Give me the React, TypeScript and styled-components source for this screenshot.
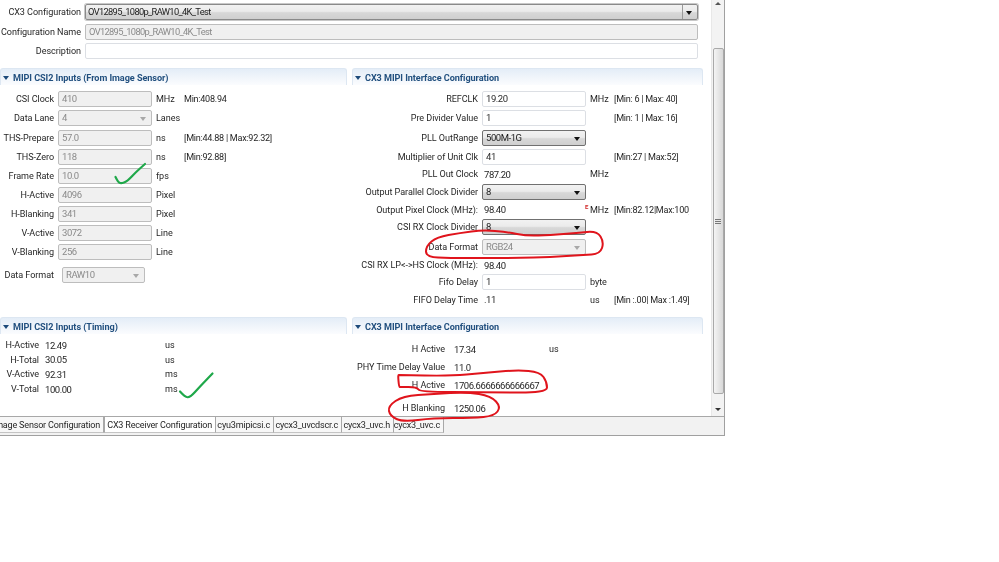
import React from "react";
import styled, { createGlobalStyle, css } from "styled-components";

const GlobalStyle = createGlobalStyle`
  html, body {
    margin: 0;
    padding: 0;
    background: #fff;
  }
  body {
    width: 999px;
    height: 562px;
    overflow: hidden;
    font-family: Roboto, "Open Sans", sans-serif;
    font-size: 9.05px;
    letter-spacing: -0.05px;
    color: #262626;
  }
`;

const Page = styled.div`
  position: relative;
  width: 999px;
  height: 562px;
  filter: blur(0.3px);
`;

const Window = styled.div`
  width: 724px;
  height: 435px;
  border-right: 1px solid #a0a0a0;
  border-bottom: 1px solid #a0a0a0;
  display: flex;
  flex-direction: column;
`;

const Body = styled.div`
  flex: 1;
  min-height: 0;
  display: flex;
`;

const Content = styled.div`
  width: 711px;
  padding-top: 4px;
`;

const TopRow = styled.div<{ $h: number }>`
  height: ${(p) => p.$h}px;
  display: grid;
  grid-template-columns: 81px 613px;
  column-gap: 4px;
`;

const TopLabel = styled.div`
  text-align: right;
  white-space: nowrap;
  line-height: 17px;
`;

const fieldBase = css`
  box-sizing: border-box;
  height: 16px;
  line-height: 14px;
  padding-left: 3px;
  border-radius: 2px;
  white-space: nowrap;
  overflow: hidden;
  letter-spacing: -0.45px;
  font-size: 9.5px;
`;

const Field = styled.div<{ $disabled?: boolean }>`
  ${fieldBase}
  border: 1px solid ${(p) => (p.$disabled ? "#bdbdbd" : "#dcdfe4")};
  background: ${(p) => (p.$disabled ? "#f0f0f0" : "#fff")};
  color: ${(p) => (p.$disabled ? "#8a8a8a" : "#2b2b2b")};
`;

const Combo = styled.div<{ $disabled?: boolean; $w?: number }>`
  ${fieldBase}
  position: relative;
  ${(p) => (p.$w ? `width: ${p.$w}px;` : "")}
  ${(p) =>
    p.$disabled
      ? css`
          border: 1px solid #bdbdbd;
          background: #f0f0f0;
          color: #8a8a8a;
        `
      : css`
          border: 1px solid #707070;
          background: linear-gradient(#f2f2f2 0%, #ebebeb 45%, #d8d8d8 55%, #cfcfcf 100%);
          color: #1c1c1c;
        `}
`;

const ComboArrow = styled.span<{ $disabled?: boolean }>`
  position: absolute;
  right: 5px;
  top: 6px;
  width: 0;
  height: 0;
  border-left: 3.5px solid transparent;
  border-right: 3.5px solid transparent;
  border-top: 4px solid ${(p) => (p.$disabled ? "#a8a8a8" : "#111")};
`;

const MainCombo = styled(Combo)`
  border: 1px solid #8a8a8a;
  box-shadow: 0 0 0 1px #c8c8c8;
  padding-left: 2px;
`;

const ComboDivider = styled.span`
  position: absolute;
  right: 14px;
  top: 0;
  bottom: 0;
  width: 1px;
  background: #9a9a9a;
`;

const ConfigName = styled.span`
  font-size: 9.3px;
  letter-spacing: -0.66px;
`;

const Panels = styled.div`
  margin-top: 9px;
  display: grid;
  grid-template-columns: 347px 351px;
  grid-template-rows: 249px 1fr;
  column-gap: 5px;
`;

const Section = styled.section``;

const SectionHead = styled.header`
  box-sizing: border-box;
  height: 17px;
  padding: 1px 0 0 2px;
  display: flex;
  align-items: center;
  gap: 4px;
  border: 1px solid #dde7f2;
  border-bottom: 0;
  border-radius: 3px 3px 0 0;
  background: linear-gradient(#e4edf7, #fbfcfe);
  font-weight: 700;
  font-size: 9.1px;
  color: #22507f;
  white-space: nowrap;
`;

const Triangle = styled.span`
  width: 0;
  height: 0;
  border-left: 3.5px solid transparent;
  border-right: 3.5px solid transparent;
  border-top: 4px solid #1d4a7a;
`;

const Rows = styled.div<{ $top: number }>`
  padding-top: ${(p) => p.$top}px;
`;

const Row = styled.div<{ $h: number; $cols: string }>`
  height: ${(p) => p.$h}px;
  display: grid;
  grid-template-columns: ${(p) => p.$cols};
  align-items: center;
  white-space: nowrap;
`;

const Label = styled.div`
  text-align: right;
`;

const Value = styled.div<{ $inset?: boolean }>`
  font-size: 9.5px;
  letter-spacing: -0.45px;
  ${(p) => (p.$inset ? "padding-left: 2px;" : "")}
`;

const Unit = styled.div`
  position: relative;
`;

const ErrorMark = styled.span`
  position: absolute;
  left: -5px;
  top: -2px;
  font-size: 6px;
  font-weight: 700;
  line-height: 8px;
  color: #d22a2a;
`;

const Note = styled.div`
  overflow: hidden;
  letter-spacing: -0.25px;
`;

const Scrollbar = styled.div`
  width: 13px;
  box-sizing: border-box;
  background: #f3f3f3;
  border-left: 1px solid #e8e8e8;
  display: flex;
  flex-direction: column;
  align-items: center;
`;

const ScrollArrow = styled.span<{ $up?: boolean }>`
  margin: ${(p) => (p.$up ? "2px 0 0" : "0 0 5px")};
  width: 0;
  height: 0;
  border-left: 3px solid transparent;
  border-right: 3px solid transparent;
  ${(p) => (p.$up ? "border-bottom: 3px solid #555;" : "border-top: 3px solid #333;")}
`;

const ScrollThumb = styled.div`
  width: 11px;
  flex: 1;
  margin: 43px 0 14px;
  box-sizing: border-box;
  border: 1px solid #a9a9a9;
  border-radius: 2px;
  background: linear-gradient(90deg, #f4f4f4, #d8d8d8);
  display: flex;
  align-items: center;
  justify-content: center;
`;

const Grip = styled.span`
  width: 6px;
  height: 5px;
  background: repeating-linear-gradient(#777 0 1px, #e8e8e8 1px 2px);
`;

const TabBar = styled.div`
  height: 19px;
  padding-bottom: 2px;
  display: flex;
  align-items: stretch;
  background: #f2f2f2;
  border-top: 1px solid #a8a8a8;
  box-sizing: border-box;
`;

const Tab = styled.div<{ $w: number; $active?: boolean }>`
  box-sizing: border-box;
  width: ${(p) => p.$w}px;
  display: flex;
  justify-content: flex-end;
  align-items: center;
  padding-right: 3px;
  overflow: hidden;
  white-space: nowrap;
  letter-spacing: -0.2px;
  border-right: 1px solid #a8a8a8;
  border-bottom: 1px solid #c4c4c4;
  background: ${(p) => (p.$active ? "#fff" : "#f7f7f7")};
  ${(p) => (p.$active ? "margin-top: -1px; border-left: 1px solid #a8a8a8; border-top: 1px solid #a8a8a8;" : "")}
`;

const Annotations = styled.svg`
  position: absolute;
  left: 0;
  top: 0;
  pointer-events: none;
`;

const smooth = (pts: number[][], closed = false) => {
  const mid = (a: number[], b: number[]) => `${(a[0] + b[0]) / 2} ${(a[1] + b[1]) / 2}`;
  if (closed) {
    const n = pts.length;
    let d = `M${mid(pts[n - 1], pts[0])}`;
    pts.forEach((p, i) => {
      d += ` Q${p[0]} ${p[1]} ${mid(p, pts[(i + 1) % n])}`;
    });
    return d + "Z";
  }
  let d = `M${pts[0][0]} ${pts[0][1]}`;
  for (let i = 1; i < pts.length - 1; i++) {
    d += ` Q${pts[i][0]} ${pts[i][1]} ${mid(pts[i], pts[i + 1])}`;
  }
  const last = pts[pts.length - 1];
  return d + ` L${last[0]} ${last[1]}`;
};

const LEFT = "54px 4px 94px 4px 28px 1fr";
const RIGHT = "126px 4px 104px 4px 24px 75px";
const LEFT_TIMING = "39px 6px 120px 1fr";
const RIGHT_TIMING = "93px 9px 95px 1fr";

const sensorRows = [
  { label: "CSI Clock", value: "410", unit: "MHz", note: "Min:408.94", h: 19 },
  { label: "Data Lane", value: "4", unit: "Lanes", combo: true, h: 20 },
  { label: "THS-Prepare", value: "57.0", unit: "ns", note: "[Min:44.88 | Max:92.32]", h: 19 },
  { label: "THS-Zero", value: "118", unit: "ns", note: "[Min:92.88]", h: 19 },
  { label: "Frame Rate", value: "10.0", unit: "fps", h: 19 },
  { label: "H-Active", value: "4096", unit: "Pixel", h: 19 },
  { label: "H-Blanking", value: "341", unit: "Pixel", h: 19 },
  { label: "V-Active", value: "3072", unit: "Line", h: 19 },
  { label: "V-Blanking", value: "256", unit: "Line", h: 19 },
];

type IfaceRow = {
  label: string;
  value: string;
  kind: "input" | "combo" | "text" | "disabled";
  unit?: string;
  note?: string;
  h: number;
  error?: boolean;
};

const ifaceRows: IfaceRow[] = [
  { label: "REFCLK", value: "19.20", kind: "input", unit: "MHz", note: "[Min: 6 | Max: 40]", h: 19 },
  { label: "Pre Divider Value", value: "1", kind: "input", note: "[Min: 1 | Max: 16]", h: 20 },
  { label: "PLL OutRange", value: "500M-1G", kind: "combo", h: 20 },
  { label: "Multiplier of Unit Clk", value: "41", kind: "input", note: "[Min:27 | Max:52]", h: 18 },
  { label: "PLL Out Clock", value: "787.20", kind: "text", unit: "MHz", h: 16 },
  { label: "Output Parallel Clock Divider", value: "8", kind: "combo", h: 19 },
  { label: "Output Pixel Clock (MHz):", value: "98.40", kind: "text", unit: "MHz", note: "[Min:82.12|Max:100]", h: 17, error: true },
  { label: "CSI RX Clock Divider", value: "8", kind: "combo", h: 18 },
  { label: "Data Format", value: "RGB24", kind: "disabled", h: 22 },
  { label: "CSI RX LP<->HS Clock  (MHz):", value: "98.40", kind: "text", h: 14 },
  { label: "Fifo Delay", value: "1", kind: "input", unit: "byte", h: 20 },
  { label: "FIFO Delay Time", value: ".11", kind: "text", unit: "us", note: "[Min :.00| Max :1.49]", h: 15 },
];

const timingRows = [
  { label: "H-Active", value: "12.49", unit: "us" },
  { label: "H-Total", value: "30.05", unit: "us" },
  { label: "V-Active", value: "92.31", unit: "ms" },
  { label: "V-Total", value: "100.00", unit: "ms" },
];

const outputRows = [
  { label: "H Active", value: "17.34", unit: "us", h: 18 },
  { label: "PHY Time Delay Value", value: "11.0", h: 18 },
  { label: "H Active", value: "1706.6666666666667", h: 18 },
  { label: "H Blanking", value: "1250.06", h: 28 },
];

const tabs = [
  { name: "Image Sensor Configuration", w: 104 },
  { name: "CX3 Receiver Configuration", w: 112, active: true },
  { name: "cyu3mipicsi.c", w: 58 },
  { name: "cycx3_uvcdscr.c", w: 68 },
  { name: "cycx3_uvc.h", w: 52 },
  { name: "cycx3_uvc.c", w: 50 },
];

function renderIfaceControl(r: IfaceRow) {
  if (r.kind === "input") return <Field>{r.value}</Field>;
  if (r.kind === "text") return <Value $inset>{r.value}</Value>;
  return (
    <Combo $disabled={r.kind === "disabled"}>
      {r.value}
      <ComboArrow $disabled={r.kind === "disabled"} />
    </Combo>
  );
}

export default function App() {
  return (
    <Page>
      <GlobalStyle />
      <Window>
        <Body>
          <Content>
            <TopRow $h={20}>
              <TopLabel>CX3 Configuration</TopLabel>
              <MainCombo>
                <ConfigName>OV12895_1080p_RAW10_4K_Test</ConfigName>
                <ComboDivider />
                <ComboArrow />
              </MainCombo>
            </TopRow>
            <TopRow $h={19}>
              <TopLabel>Configuration Name</TopLabel>
              <Field $disabled>
                <ConfigName>OV12895_1080p_RAW10_4K_Test</ConfigName>
              </Field>
            </TopRow>
            <TopRow $h={16}>
              <TopLabel>Description</TopLabel>
              <Field />
            </TopRow>
            <Panels>
              <Section>
                <SectionHead>
                  <Triangle />
                  MIPI CSI2 Inputs (From Image Sensor)
                </SectionHead>
                <Rows $top={4}>
                  {sensorRows.map((r) => (
                    <Row key={r.label} $h={r.h} $cols={LEFT}>
                      <Label>{r.label}</Label>
                      <span />
                      {r.combo ? (
                        <Combo $disabled>
                          {r.value}
                          <ComboArrow $disabled />
                        </Combo>
                      ) : (
                        <Field $disabled>{r.value}</Field>
                      )}
                      <span />
                      <Unit>{r.unit}</Unit>
                      <Note>{r.note}</Note>
                    </Row>
                  ))}
                  <Row $h={28} $cols="54px 8px 1fr">
                    <Label>Data Format</Label>
                    <span />
                    <Combo $disabled $w={83}>
                      RAW10
                      <ComboArrow $disabled />
                    </Combo>
                  </Row>
                </Rows>
              </Section>
              <Section>
                <SectionHead>
                  <Triangle />
                  CX3 MIPI Interface Configuration
                </SectionHead>
                <Rows $top={4}>
                  {ifaceRows.map((r) => (
                    <Row key={r.label} $h={r.h} $cols={RIGHT}>
                      <Label>{r.label}</Label>
                      <span />
                      {renderIfaceControl(r)}
                      <span />
                      <Unit>
                        {r.error && <ErrorMark>E</ErrorMark>}
                        {r.unit}
                      </Unit>
                      <Note>{r.note}</Note>
                    </Row>
                  ))}
                </Rows>
              </Section>
              <Section>
                <SectionHead>
                  <Triangle />
                  MIPI CSI2 Inputs (Timing)
                </SectionHead>
                <Rows $top={4}>
                  {timingRows.map((r) => (
                    <Row key={r.label} $h={14.6} $cols={LEFT_TIMING}>
                      <Label>{r.label}</Label>
                      <span />
                      <Value>{r.value}</Value>
                      <Unit>{r.unit}</Unit>
                    </Row>
                  ))}
                </Rows>
              </Section>
              <Section>
                <SectionHead>
                  <Triangle />
                  CX3 MIPI Interface Configuration
                </SectionHead>
                <Rows $top={6}>
                  {outputRows.map((r, i) => (
                    <Row key={i} $h={r.h} $cols={RIGHT_TIMING}>
                      <Label>{r.label}</Label>
                      <span />
                      <Value>{r.value}</Value>
                      <Unit>{r.unit}</Unit>
                    </Row>
                  ))}
                </Rows>
              </Section>
            </Panels>
          </Content>
          <Scrollbar>
            <ScrollArrow $up />
            <ScrollThumb>
              <Grip />
            </ScrollThumb>
            <ScrollArrow />
          </Scrollbar>
        </Body>
        <TabBar>
          {tabs.map((t) => (
            <Tab key={t.name} $w={t.w} $active={t.active}>
              {t.name}
            </Tab>
          ))}
        </TabBar>
      </Window>
      <Annotations width="999" height="562" viewBox="0 0 999 562" fill="none" strokeLinecap="round" strokeLinejoin="round">
        <path
          d={smooth([[115.5, 177], [118, 182], [121, 183.5], [127, 181.5], [136, 172], [145, 164]])}
          stroke="#1fa84a"
          strokeWidth="2.2"
        />
        <path
          d={smooth([[180, 391.5], [185, 397], [190, 397.5], [200, 386.5], [212.5, 373.5]])}
          stroke="#1fa84a"
          strokeWidth="2.2"
        />
        <path
          d={smooth(
            [[483, 230], [507, 232], [527, 236], [550, 235], [577, 233], [597, 231], [604, 242], [600, 254], [583, 255], [550, 257], [517, 258], [483, 258], [450, 258], [426, 257], [426, 246], [437, 237], [460, 233]],
            true
          )}
          stroke="#e0141c"
          strokeWidth="2"
        />
        <path
          d={smooth([[399, 387], [398, 375], [399, 375], [450, 376], [483, 373], [517, 370], [540, 372], [547, 382], [547, 393], [483, 392], [420, 392], [417, 387], [400, 387]], true)}
          stroke="#e0141c"
          strokeWidth="2"
        />
        <path
          d={smooth([[403, 396], [433, 394], [467, 392], [491, 396], [501, 407], [494, 416], [473, 418], [433, 418], [403, 422], [390, 416], [388, 406]], true)}
          stroke="#e0141c"
          strokeWidth="2"
        />
      </Annotations>
    </Page>
  );
}
